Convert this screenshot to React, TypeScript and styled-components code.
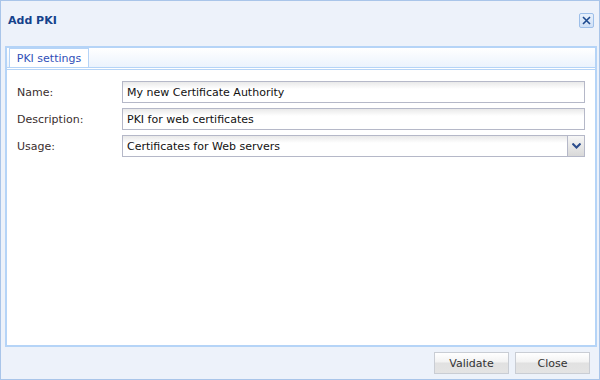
import styled, { createGlobalStyle } from 'styled-components'

const GlobalStyle = createGlobalStyle`
  html, body {
    margin: 0;
    padding: 0;
    width: 600px;
    height: 380px;
    overflow: hidden;
    background: #ffffff;
  }
  * {
    box-sizing: border-box;
  }
`

const Window = styled.div`
  --blue: #b5d4f7;
  --title: #15428b;

  width: 600px;
  height: 380px;
  display: flex;
  flex-direction: column;
  background: #edf2fa;
  border: 1px solid #a9c5e9;
  font-family: 'DejaVu Sans', Tahoma, Verdana, sans-serif;
  font-size: 11px;
  color: #333;
`

const Header = styled.div`
  height: 45px;
  flex: none;
  display: flex;
  align-items: flex-start;
  justify-content: space-between;
  padding: 12px 5px 0 7px;
`

const Title = styled.h1`
  margin: 0;
  font-size: 11px;
  line-height: 15px;
  font-weight: bold;
  color: var(--title);
`

const CloseButton = styled.button`
  width: 15px;
  height: 15px;
  padding: 0;
  display: flex;
  align-items: center;
  justify-content: center;
  border: 1px solid #9dbfe9;
  border-radius: 2px;
  background: linear-gradient(to bottom, #e8f1fc, #cfe0f6);
  cursor: pointer;
`

const TabPanel = styled.div`
  flex: 1;
  display: flex;
  flex-direction: column;
  margin: 0 2px 0 4px;
  border: 2px solid var(--blue);
  background: #fff;
`

const TabStrip = styled.div`
  height: 20px;
  flex: none;
  display: flex;
  align-items: flex-end;
  padding-left: 2px;
  background: linear-gradient(to bottom, #ffffff, #ebf3fd);
  border-bottom: 1px solid var(--blue);
`

const Tab = styled.div<{ $active?: boolean }>`
  width: 80px;
  height: 19px;
  display: flex;
  align-items: center;
  justify-content: center;
  border: 1px solid var(--blue);
  border-bottom: none;
  background: ${({ $active }) => ($active ? '#ffffff' : '#e4eefb')};
  color: #2f4fb8;
  padding-top: 1px;
`

const Body = styled.div`
  flex: 1;
  margin-top: 1px;
  border-top: 1px solid var(--blue);
  padding: 11px 10px;
  display: flex;
  flex-direction: column;
  gap: 5px;
`

const Row = styled.div`
  display: grid;
  grid-template-columns: 105px 1fr;
  align-items: center;
  height: 22px;
`

const Label = styled.label`
  color: #3a2e2e;
`

const fieldBg = 'linear-gradient(to bottom, #e9e9e9 0, #ffffff 7px)'

const TextField = styled.input`
  height: 22px;
  width: 100%;
  margin: 0;
  padding: 0 4px;
  border: 1px solid #b5b8c8;
  background: ${fieldBg};
  font: inherit;
  color: #111;
  outline: none;
`

const Combo = styled.div`
  height: 22px;
  display: flex;
  border: 1px solid #b5b8c8;
  background: ${fieldBg};
`

const ComboValue = styled.div`
  flex: 1;
  padding: 0 4px;
  display: flex;
  align-items: center;
  color: #111;
`

const Trigger = styled.div`
  width: 17px;
  display: flex;
  align-items: center;
  justify-content: center;
  border-left: 1px solid #b5b8c8;
  background: linear-gradient(to bottom, #f6f6f6, #d8d8d8);
`

const Footer = styled.div`
  height: 32px;
  flex: none;
  display: flex;
  justify-content: flex-end;
  align-items: center;
  gap: 6px;
  padding: 0 9px 0 0;
`

const Button = styled.button`
  width: 75px;
  height: 22px;
  padding: 0;
  border: 1px solid #c9cdd4;
  background: linear-gradient(to bottom, #ffffff 0, #f2f2f2 45%, #e1e1e1 50%, #e4e4e4 100%);
  font: inherit;
  color: #333;
  cursor: pointer;
`

export default function App() {
  return (
    <>
      <GlobalStyle />
      <Window>
        <Header>
          <Title>Add PKI</Title>
          <CloseButton aria-label="Close">
            <svg width="9" height="9" viewBox="0 0 9 9">
              <path d="M1 1 L8 8 M8 1 L1 8" stroke="#1d4a8f" strokeWidth="1.6" />
            </svg>
          </CloseButton>
        </Header>
        <TabPanel>
          <TabStrip>
            <Tab $active>PKI settings</Tab>
          </TabStrip>
          <Body>
            <Row>
              <Label>Name:</Label>
              <TextField defaultValue="My new Certificate Authority" />
            </Row>
            <Row>
              <Label>Description:</Label>
              <TextField defaultValue="PKI for web certificates" />
            </Row>
            <Row>
              <Label>Usage:</Label>
              <Combo>
                <ComboValue>Certificates for Web servers</ComboValue>
                <Trigger>
                  <svg width="9" height="6" viewBox="0 0 9 6">
                    <path d="M0.5 0.5 L4.5 4.5 L8.5 0.5" fill="none" stroke="#2b4c8c" strokeWidth="2" />
                  </svg>
                </Trigger>
              </Combo>
            </Row>
          </Body>
        </TabPanel>
        <Footer>
          <Button>Validate</Button>
          <Button>Close</Button>
        </Footer>
      </Window>
    </>
  )
}
